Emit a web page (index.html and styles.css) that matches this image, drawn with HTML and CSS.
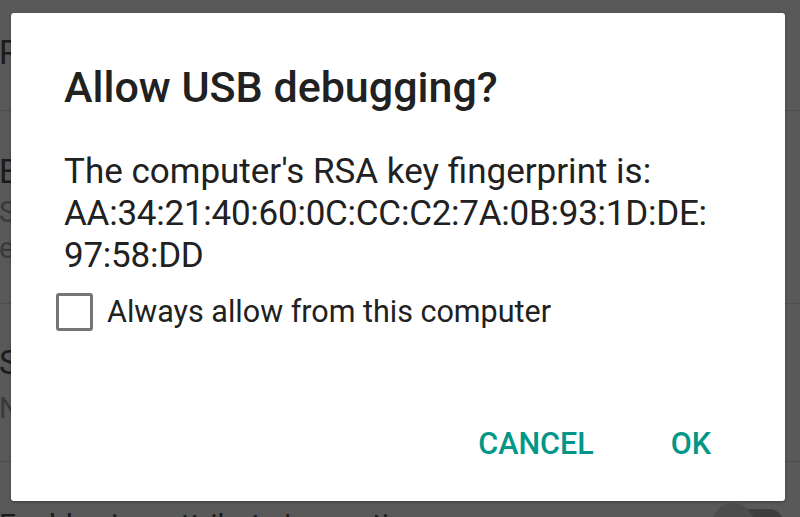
FILE: index.html
```html
<!DOCTYPE html>
<html>
<head>
<meta charset="utf-8">
<link rel="stylesheet" href="styles.css">
</head>
<body>
<div class="screen">
  <div class="list">
    <div class="row row-1">
      <div class="row-title">Revoke USB debugging authorizations</div>
    </div>
    <div class="row row-2">
      <div class="row-title">Bug report shortcut</div>
      <div class="row-summary">Show a button in the power menu for<br>easily taking a bug report</div>
    </div>
    <div class="row row-3">
      <div class="row-title">Select mock location app</div>
      <div class="row-summary">No mock location app set</div>
    </div>
    <div class="row row-4">
      <div class="row-title">Enable view attribute inspection</div>
      <div class="switch"><span class="track"></span><span class="thumb"></span></div>
    </div>
  </div>

  <div class="dialog">
    <h1 class="dialog-title">Allow USB debugging?</h1>
    <p class="dialog-body">The computer's RSA key fingerprint is:<br><span class="fingerprint">AA:34:21:40:60:0C:CC:C2:7A:0B:93:1D:DE:<br>97:58:DD</span></p>
    <label class="check-row">
      <span class="checkbox"></span>
      <span class="check-label">Always allow from this computer</span>
    </label>
    <div class="actions">
      <button class="action">CANCEL</button>
      <button class="action">OK</button>
    </div>
  </div>
</div>
</body>
</html>
```

FILE: styles.css
```css
* { box-sizing: border-box; }

html, body {
  margin: 0;
  padding: 0;
  width: 800px;
  height: 517px;
  overflow: hidden;
  background: #595959;
  font-family: Roboto, "Noto Sans", "Liberation Sans", sans-serif;
}

.screen {
  position: relative;
  width: 800px;
  height: 517px;
  overflow: hidden;
}

.list {
  display: flex;
  flex-direction: column;
  margin-left: -1px;
}

.row {
  display: flex;
  flex-direction: column;
  border-bottom: 1px solid #4d4d4d;
  white-space: nowrap;
}

.row-1 { height: 111px; padding-top: 33px; }
.row-2 { height: 193px; padding-top: 41px; }
.row-3 { height: 158px; padding-top: 39px; }
.row-4 { height: 80px; padding-top: 43px; border-bottom: none; position: relative; }

.row-title {
  font-size: 33px;
  line-height: 40px;
  color: #1b1b1b;
}

.row-4 .row-title { font-size: 30px; }

.row-summary {
  margin-top: 2px;
  font-size: 29px;
  line-height: 36px;
  color: #3a3a3a;
}

.row-3 .row-summary { margin-top: 7px; }

.switch {
  position: absolute;
  left: 713px;
  top: 41px;
  width: 72px;
  height: 42px;
}

.track {
  position: absolute;
  left: 8px;
  top: 6px;
  width: 64px;
  height: 30px;
  border-radius: 15px;
  background: #3e3e3e;
}

.thumb {
  position: absolute;
  left: 0;
  top: 0;
  width: 42px;
  height: 42px;
  border-radius: 50%;
  background: #4c4c4c;
}

.dialog {
  position: absolute;
  left: 11px;
  top: 13px;
  width: 774px;
  height: 488px;
  background: #ffffff;
  border-radius: 3px;
  box-shadow: 0 1px 3px rgba(0,0,0,0.3);
  display: flex;
  flex-direction: column;
  padding: 53px 0 28px 53px;
}

.dialog-title {
  margin: 0;
  font-size: 43px;
  line-height: 42px;
  font-weight: 500;
  color: #212121;
}

.dialog-body {
  margin: 43px 0 0;
  font-size: 35px;
  line-height: 42px;
  color: #212121;
}

.fingerprint {
  letter-spacing: -0.25px;
}

.check-row {
  display: flex;
  align-items: center;
  gap: 14px;
  margin: 16px 0 0 -8px;
  height: 38px;
}

.checkbox {
  width: 37px;
  height: 38px;
  border: 3px solid #757575;
  border-radius: 3px;
  flex: none;
}

.check-label {
  font-size: 30.5px;
  line-height: 38px;
  color: #212121;
}

.actions {
  margin-top: auto;
  display: flex;
  justify-content: flex-end;
  gap: 45px;
  padding-right: 58px;
}

.action {
  border: none;
  background: none;
  padding: 0 16px;
  height: 60px;
  font-family: inherit;
  font-size: 30.5px;
  font-weight: 500;
  color: #009688;
}
```
